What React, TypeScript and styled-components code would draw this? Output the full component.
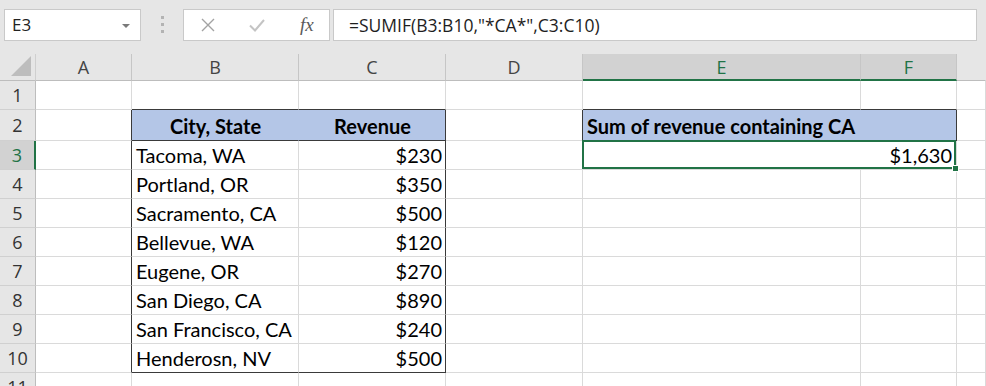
import styled, { createGlobalStyle } from 'styled-components';

const GlobalStyle = createGlobalStyle`
  html, body {
    margin: 0;
    padding: 0;
    background: #ffffff;
    overflow: hidden;
  }
`;

const green = '#217346';
const gridLine = '#dadada';
const dark = '#3a3a3a';

const columns = ['A', 'B', 'C', 'D', 'E', 'F'];
const selectedCols = ['E', 'F'];

const cities: [string, string][] = [
  ['Tacoma, WA', '$230'],
  ['Portland, OR', '$350'],
  ['Sacramento, CA', '$500'],
  ['Bellevue, WA', '$120'],
  ['Eugene, OR', '$270'],
  ['San Diego, CA', '$890'],
  ['San Francisco, CA', '$240'],
  ['Henderosn, NV', '$500'],
];

export default function App() {
  return (
    <>
      <GlobalStyle />
      <Toolbar>
        <NameBox>
          E3
          <Caret />
        </NameBox>
        <Grip>
          <i />
          <i />
          <i />
        </Grip>
        <FxBox>
          <svg width="16" height="16" viewBox="0 0 16 16">
            <path d="M2 2 L14 14 M14 2 L2 14" stroke="#a3a3a3" strokeWidth="1.4" fill="none" />
          </svg>
          <svg width="18" height="16" viewBox="0 0 18 16">
            <path d="M2 8.5 L7 13.5 L16 3" stroke="#c4c4c4" strokeWidth="2" fill="none" />
          </svg>
          <FxLabel>fx</FxLabel>
        </FxBox>
        <FormulaInput>=SUMIF(B3:B10,"*CA*",C3:C10)</FormulaInput>
      </Toolbar>

      <Sheet>
        <Corner>
          <svg width="22" height="22" viewBox="0 0 22 22">
            <path d="M21 1 L21 21 L1 21 Z" fill="#bdbdbd" />
          </svg>
        </Corner>
        {columns.map(c => (
          <ColHead key={c} $selected={selectedCols.includes(c)}>{c}</ColHead>
        ))}
        <ColHead $filler />

        {/* row 1 */}
        <RowHead>1</RowHead>
        <Cell />
        <Cell $darkBottom />
        <Cell $darkBottom />
        <Cell />
        <Cell $darkBottom />
        <Cell $darkBottom />
        <Cell />

        {/* row 2 */}
        <RowHead>2</RowHead>
        <Cell $darkRight />
        <Cell $fill="#b4c6e7" $bold $align="center" $noRight $darkBottom>City, State</Cell>
        <Cell $fill="#b4c6e7" $bold $align="center" $darkRight $darkBottom>Revenue</Cell>
        <Cell $darkRight />
        <Cell $fill="#b4c6e7" $bold $span={2} $darkRight $darkBottom>Sum of revenue containing CA</Cell>
        <Cell />

        {cities.map(([city, revenue], i) => {
          const row = i + 3;
          const last = row === 10;
          return [
            <RowHead key={`h${row}`} $selected={row === 3}>{row}</RowHead>,
            <Cell key={`a${row}`} $darkRight />,
            <Cell key={`b${row}`} $darkBottom={last}>{city}</Cell>,
            <Cell key={`c${row}`} $align="flex-end" $darkRight $darkBottom={last}>{revenue}</Cell>,
            <Cell key={`d${row}`} />,
            row === 3 ? (
              <ActiveCell key={`e${row}`}>
                $1,630
                <FillHandle />
              </ActiveCell>
            ) : (
              <Cell key={`e${row}`} />
            ),
            row === 3 ? null : <Cell key={`f${row}`} />,
            <Cell key={`g${row}`} />,
          ];
        })}

        {/* row 11 */}
        <RowHead>11</RowHead>
        {columns.map(c => <Cell key={`r11${c}`} />)}
        <Cell />
      </Sheet>
    </>
  );
}

const Toolbar = styled.div`
  display: flex;
  align-items: center;
  height: 54px;
  box-sizing: border-box;
  padding: 0 9px 5px 4px;
  background: #e6e6e6;
  font-family: 'Open Sans', 'Noto Sans', sans-serif;
`;

const NameBox = styled.div`
  position: relative;
  display: flex;
  align-items: center;
  width: 137px;
  height: 32px;
  box-sizing: border-box;
  padding-left: 7px;
  background: #fff;
  border: 1px solid #c9c9c9;
  font-size: 17px;
  color: #222;
`;

const Caret = styled.span`
  position: absolute;
  right: 10px;
  top: 14px;
  border-left: 4px solid transparent;
  border-right: 4px solid transparent;
  border-top: 4px solid #7a7a7a;
`;

const Grip = styled.div`
  display: flex;
  flex-direction: column;
  align-items: center;
  gap: 4px;
  width: 42px;

  i {
    width: 3px;
    height: 3px;
    background: #b3b3b3;
  }
`;

const FxBox = styled.div`
  display: flex;
  align-items: center;
  width: 147px;
  height: 32px;
  box-sizing: border-box;
  padding-left: 16px;
  gap: 32px;
  background: #fff;
  border: 1px solid #c9c9c9;
`;

const FxLabel = styled.span`
  font-family: 'Liberation Serif', serif;
  font-style: italic;
  font-size: 19px;
  color: #5a5a5a;
  margin-left: 2px;
`;

const FormulaInput = styled.div`
  flex: 1;
  display: flex;
  align-items: center;
  height: 32px;
  box-sizing: border-box;
  margin-left: 3px;
  padding-left: 15px;
  background: #fff;
  border: 1px solid #c9c9c9;
  font-size: 17.5px;
  color: #1e1e1e;
`;

const Sheet = styled.div`
  display: grid;
  grid-template-columns: 36px 96px 167px 147px 137px 278px 96px 1fr;
  grid-template-rows: 27px 29px 31px repeat(9, 29px);
  font-family: Lato, 'Open Sans', sans-serif;
  font-size: 20px;
  color: #000;
`;

const Corner = styled.div`
  display: flex;
  align-items: flex-end;
  justify-content: flex-end;
  padding: 0 3px 3px 0;
  background: #e6e6e6;
  border-right: 1px solid #cfcfcf;
  border-bottom: 1px solid #bdbdbd;
`;

const ColHead = styled.div<{ $selected?: boolean; $filler?: boolean }>`
  display: flex;
  align-items: center;
  justify-content: center;
  box-sizing: border-box;
  font-family: 'Open Sans', 'Noto Sans', sans-serif;
  font-size: 18px;
  color: ${p => (p.$selected ? green : '#444')};
  background: ${p => (p.$selected ? '#d2d2d2' : '#e6e6e6')};
  border-right: 1px solid ${p => (p.$filler ? 'transparent' : '#c6c6c6')};
  border-bottom: ${p => (p.$selected ? `2px solid ${green}` : '1px solid #bdbdbd')};
`;

const RowHead = styled.div<{ $selected?: boolean }>`
  display: flex;
  align-items: center;
  justify-content: center;
  box-sizing: border-box;
  font-family: 'Open Sans', 'Noto Sans', sans-serif;
  font-size: 18px;
  color: ${p => (p.$selected ? green : '#333')};
  background: ${p => (p.$selected ? '#d2d2d2' : '#e6e6e6')};
  border-right: ${p => (p.$selected ? `2px solid ${green}` : '1px solid #bdbdbd')};
  border-bottom: 1px solid #d0d0d0;
`;

const Cell = styled.div<{
  $fill?: string;
  $bold?: boolean;
  $align?: string;
  $span?: number;
  $darkRight?: boolean;
  $darkBottom?: boolean;
  $noRight?: boolean;
}>`
  display: flex;
  align-items: flex-end;
  justify-content: ${p => p.$align ?? 'flex-start'};
  box-sizing: border-box;
  padding: 0 3px 2px 4px;
  white-space: nowrap;
  overflow: hidden;
  grid-column: ${p => (p.$span ? `span ${p.$span}` : 'auto')};
  font-weight: ${p => (p.$bold ? 700 : 400)};
  background: ${p => p.$fill ?? '#fff'};
  border-right: 1px solid
    ${p => (p.$darkRight ? dark : p.$noRight ? p.$fill ?? '#fff' : gridLine)};
  border-bottom: 1px solid ${p => (p.$darkBottom ? dark : gridLine)};
`;

const ActiveCell = styled.div`
  position: relative;
  grid-column: span 2;
  display: flex;
  align-items: flex-end;
  justify-content: flex-end;
  box-sizing: border-box;
  padding: 0 4px 2px 4px;
  background: #fff;
  border-right: 1px solid ${gridLine};
  border-bottom: 1px solid ${gridLine};

  &::after {
    content: '';
    position: absolute;
    inset: -1px 0 0 -1px;
    border: 2px solid ${green};
    pointer-events: none;
  }
`;

const FillHandle = styled.span`
  position: absolute;
  right: -3px;
  bottom: -3px;
  width: 5px;
  height: 5px;
  background: ${green};
  border: 1px solid #fff;
  z-index: 1;
`;
